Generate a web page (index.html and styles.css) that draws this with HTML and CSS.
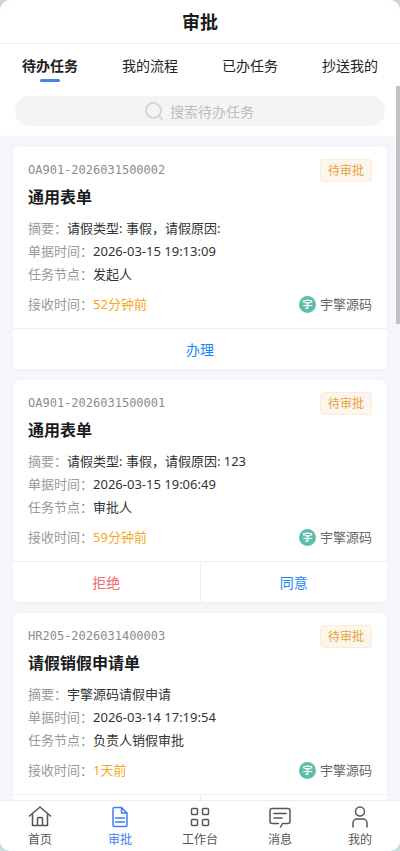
FILE: index.html
```html
<!DOCTYPE html>
<html lang="zh-CN">
<head>
<meta charset="utf-8">
<meta name="viewport" content="width=device-width, initial-scale=1">
<title>审批</title>
<link rel="stylesheet" href="styles.css">
</head>
<body>
<div class="app">
  <header class="header"><h1>审批</h1></header>
  <nav class="tabs">
    <button class="tab active" type="button">待办任务</button>
    <button class="tab" type="button">我的流程</button>
    <button class="tab" type="button">已办任务</button>
    <button class="tab" type="button">抄送我的</button>
  </nav>
  <main class="content">
    <div class="scroller">
      <div class="search-bar">
        <label class="search">
          <svg viewBox="0 0 20 20" aria-hidden="true"><circle cx="9.5" cy="9.5" r="7.5"/><path d="M15 15l3 3"/></svg>
          <input type="text" placeholder="搜索待办任务" aria-label="搜索待办任务">
        </label>
      </div>
      <div class="list">
        <article class="card">
          <div class="card-body">
            <div class="card-head"><span class="code">OA901-2026031500002</span><span class="badge">待审批</span></div>
            <h2>通用表单</h2>
            <dl>
              <div><dt>摘要：</dt><dd>请假类型: 事假，请假原因:</dd></div>
              <div><dt>单据时间：</dt><dd>2026-03-15 19:13:09</dd></div>
              <div><dt>任务节点：</dt><dd>发起人</dd></div>
            </dl>
            <div class="meta"><span class="label">接收时间：</span><span class="ago">52分钟前</span><span class="user"><span class="avatar">宇</span>宇擎源码</span></div>
          </div>
          <div class="actions"><button type="button">办理</button></div>
        </article>
        <article class="card">
          <div class="card-body">
            <div class="card-head"><span class="code">OA901-2026031500001</span><span class="badge">待审批</span></div>
            <h2>通用表单</h2>
            <dl>
              <div><dt>摘要：</dt><dd>请假类型: 事假，请假原因: 123</dd></div>
              <div><dt>单据时间：</dt><dd>2026-03-15 19:06:49</dd></div>
              <div><dt>任务节点：</dt><dd>审批人</dd></div>
            </dl>
            <div class="meta"><span class="label">接收时间：</span><span class="ago">59分钟前</span><span class="user"><span class="avatar">宇</span>宇擎源码</span></div>
          </div>
          <div class="actions"><button class="reject" type="button">拒绝</button><button type="button">同意</button></div>
        </article>
        <article class="card">
          <div class="card-body">
            <div class="card-head"><span class="code">HR205-2026031400003</span><span class="badge">待审批</span></div>
            <h2>请假销假申请单</h2>
            <dl>
              <div><dt>摘要：</dt><dd>宇擎源码请假申请</dd></div>
              <div><dt>单据时间：</dt><dd>2026-03-14 17:19:54</dd></div>
              <div><dt>任务节点：</dt><dd>负责人销假审批</dd></div>
            </dl>
            <div class="meta"><span class="label">接收时间：</span><span class="ago">1天前</span><span class="user"><span class="avatar">宇</span>宇擎源码</span></div>
          </div>
          <div class="actions"><button class="reject" type="button">拒绝</button><button type="button">同意</button></div>
        </article>
      </div>
    </div>
    <span class="thumb"></span>
  </main>
  <nav class="tabbar">
    <a href="#home"><svg viewBox="0 0 24 24" aria-hidden="true"><path d="M1.500 11L12 2l10.500 9M4.500 9V20.500h15V9M9.500 20.500v-7a1 1 0 0 1 1-1h3a1 1 0 0 1 1 1v7"/></svg>首页</a>
    <a class="active" href="#approval"><svg viewBox="0 0 24 24" aria-hidden="true"><path d="M13.500 2.500H6.500a1.500 1.500 0 0 0-1.500 1.500v16a1.500 1.500 0 0 0 1.500 1.500h11a1.500 1.500 0 0 0 1.500-1.500V8zM13.500 2.500V8H19M7.500 13h9M7.500 17h9"/></svg>审批</a>
    <a href="#workbench"><svg viewBox="0 0 24 24" aria-hidden="true"><rect x="3.500" y="3.500" width="6" height="6" rx="1"/><rect x="14.500" y="3.500" width="6" height="6" rx="1"/><rect x="3.500" y="14.500" width="6" height="6" rx="1"/><rect x="14.500" y="14.500" width="6" height="6" rx="1"/></svg>工作台</a>
    <a href="#messages"><svg viewBox="0 0 24 24" aria-hidden="true"><path d="M10.500 18.500H4a2 2 0 0 1-2-2v-11a2 2 0 0 1 2-2h16a2 2 0 0 1 2 2v11a2 2 0 0 1-2 2h-5.500L12.500 22M6 8.500h12M6 13h8"/></svg>消息</a>
    <a href="#me"><svg viewBox="0 0 24 24" aria-hidden="true"><circle cx="12" cy="6.500" r="4.500"/><path d="M5 22V18a4 4 0 0 1 4-4h6a4 4 0 0 1 4 4v4"/></svg>我的</a>
  </nav>
</div>
</body>
</html>
```
FILE: styles.css
```css
* { box-sizing: border-box; }
body {
  margin: 0;
  background: #c5dcdb;
  color: #333;
  font: 13px/23px "Noto Sans", "Noto Sans CJK SC", sans-serif;
}
h1, h2, dl, dd { margin: 0; }
button {
  padding: 0;
  border: 0;
  background: none;
  font: inherit;
  cursor: pointer;
}
.app {
  display: flex;
  flex-direction: column;
  height: 100vh;
  overflow: hidden;
  border-radius: 10px;
  background: #fff;
}
.header {
  flex: none;
  border-bottom: 1px solid #f1f1f1;
  text-align: center;
}
.header h1 {
  color: #1a1a1a;
  font-size: 18px;
  line-height: 45px;
  height: 43px;
}
.tabs { display: flex; flex: none; }
.tab {
  flex: 1;
  display: flex;
  flex-direction: column;
  align-items: center;
  height: 42px;
  padding-top: 10px;
  color: #222;
  font-size: 14px;
  line-height: 24px;
}
.tab.active { font-weight: bold; }
.tab.active::after {
  content: "";
  width: 20px;
  height: 3px;
  margin-top: 1px;
  border-radius: 2px;
  background: #4b80f0;
}
.content {
  position: relative;
  flex: 1;
  min-height: 0;
}
.scroller {
  height: 100%;
  overflow-y: auto;
  scrollbar-width: none;
  background: #f5f6fb;
}
.thumb {
  position: absolute;
  top: 0;
  right: 0;
  width: 4px;
  height: 33.3%;
  background: #c1c1c1;
}
.search-bar { padding: 10px 15px; background: #fff; }
.search {
  display: flex;
  justify-content: center;
  align-items: center;
  gap: 6px;
  height: 30px;
  border-radius: 15px;
  background: #f4f4f4;
}
.search svg {
  width: 20px;
  height: 20px;
  fill: none;
  stroke: #d5d5d5;
  stroke-width: 2;
  stroke-linecap: round;
}
.search input {
  width: 86px;
  padding: 0;
  border: 0;
  outline: 0;
  background: none;
  font: inherit;
  font-size: 14px;
  appearance: none;
}
.search input::placeholder { color: #bdbdbd; }
.list {
  display: flex;
  flex-direction: column;
  gap: 11px;
  padding: 11px 13px;
}
.card {
  border-radius: 6px;
  background: #fff;
  box-shadow: 0 1px 4px rgba(0, 0, 0, 0.04);
}
.card-body { padding: 12px 15px; }
.card-head {
  display: flex;
  justify-content: space-between;
  align-items: center;
}
.code {
  color: #8c8c8c;
  font-family: "DejaVu Sans Mono", monospace;
  font-size: 12px;
}
.badge {
  padding: 0 7px;
  border: 1px solid #faecd8;
  border-radius: 3px;
  background: #fdf6ec;
  color: #e6a23c;
  font-size: 12px;
  line-height: 21px;
}
.card h2 {
  margin-bottom: 5px;
  color: #1a1a1a;
  font-size: 16px;
  line-height: 30px;
}
dl div { display: flex; }
dt, .label { color: #999; }
.meta {
  display: flex;
  align-items: center;
  height: 24px;
  margin-top: 6px;
}
.ago { color: #f5a623; }
.user {
  display: flex;
  align-items: center;
  gap: 4px;
  margin-left: auto;
  color: #666;
}
.avatar {
  width: 17px;
  height: 17px;
  border-radius: 50%;
  background: #5dbfab;
  color: #fff;
  font-size: 10px;
  font-weight: bold;
  line-height: 17px;
  text-align: center;
}
.actions {
  display: flex;
  border-top: 1px solid #eee;
}
.actions button {
  flex: 1;
  height: 40px;
  color: #1989fa;
  font-size: 14px;
}
.actions button + button { border-left: 1px solid #eee; }
.actions .reject { color: #f56c6c; }
.tabbar {
  display: flex;
  flex: none;
  height: 51px;
  padding-top: 4px;
  border-top: 1px solid #ededed;
}
.tabbar a {
  flex: 1;
  display: flex;
  flex-direction: column;
  align-items: center;
  color: #555;
  font-size: 12px;
  line-height: 22px;
  text-decoration: none;
}
.tabbar a.active { color: #3f7df6; }
.tabbar svg {
  width: 24px;
  height: 24px;
  fill: none;
  stroke: currentColor;
  stroke-width: 1.5;
  stroke-linecap: round;
  stroke-linejoin: round;
}
```
